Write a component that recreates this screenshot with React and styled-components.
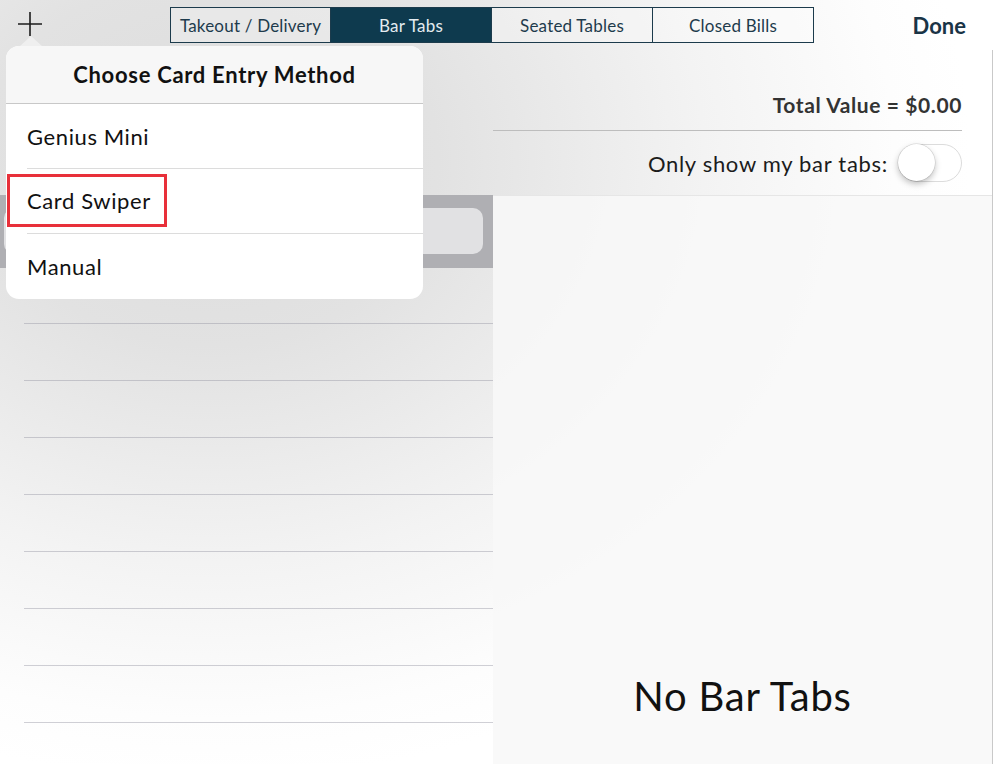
import styled, { createGlobalStyle } from "styled-components";

const GlobalStyle = createGlobalStyle`
    body {
        margin: 0;
        font-family: Lato, "Noto Sans", sans-serif;
    }
`;

const tabs = ["Takeout / Delivery", "Bar Tabs", "Seated Tables", "Closed Bills"];
const methods = ["Genius Mini", "Card Swiper", "Manual"];
const rowCount = 8;

const App = () => {
    return (
        <Page>
            <GlobalStyle />
            <TopBar>
                <PlusButton>
                    <svg width="26" height="26" viewBox="0 0 26 26">
                        <path d="M13 1v24M1 13h24" stroke="#1c1c1c" strokeWidth="1.6" />
                    </svg>
                </PlusButton>
                <Segmented>
                    {tabs.map((t) => (
                        <Segment key={t} active={t === "Bar Tabs"}>{t}</Segment>
                    ))}
                </Segmented>
                <DoneButton>Done</DoneButton>
            </TopBar>
            <Body>
                <LeftPanel>
                    <SearchBand>
                        <SearchField />
                    </SearchBand>
                    {Array.from({ length: rowCount }).map((_, i) => (
                        <ListRow key={i} first={i === 0} />
                    ))}
                </LeftPanel>
                <RightPanel>
                    <RightHeader>
                        <TotalRow>Total Value = $0.00</TotalRow>
                        <FilterRow>
                            <FilterLabel>Only show my bar tabs:</FilterLabel>
                            <Switch>
                                <Knob />
                            </Switch>
                        </FilterRow>
                    </RightHeader>
                    <EmptyArea>
                        <EmptyText>No Bar Tabs</EmptyText>
                    </EmptyArea>
                </RightPanel>
            </Body>
            <PopoverArrow />
            <Popover>
                <PopoverTitle>Choose Card Entry Method</PopoverTitle>
                {methods.map((m) => (
                    <MethodRow key={m}>
                        <MethodText highlight={m === "Card Swiper"}>{m}</MethodText>
                    </MethodRow>
                ))}
            </Popover>
        </Page>
    );
};

const Page = styled.div`
    position: relative;
    width: 993px;
    height: 764px;
    overflow: hidden;
    background: radial-gradient(ellipse 760px 620px at 210px 160px, #dcdcdc 0%, #e2e2e2 30%, #f3f3f3 65%, #fdfdfd 90%, #ffffff 100%);
`;

const TopBar = styled.div`
    height: 50px;
    display: flex;
    align-items: center;
    padding: 0 27px 0 17px;
    box-sizing: border-box;
`;

const PlusButton = styled.div`
    width: 26px;
    height: 26px;
    display: flex;
    margin-top: -2px;
`;

const Segmented = styled.div`
    display: flex;
    margin-left: 127px;
    border: 1px solid #1c3b4c;
    height: 36px;
    box-sizing: border-box;
`;

const Segment = styled.div`
    width: 160px;
    display: flex;
    align-items: center;
    justify-content: center;
    padding-top: 1px;
    font-size: 17px;
    letter-spacing: 0.2px;
    color: ${(p) => (p.active ? "#e4ecf0" : "#1e3b4c")};
    background: ${(p) => (p.active ? "#0e3a4e" : "rgba(255,255,255,0.25)")};
    border-left: 1px solid #1c3b4c;

    &:first-child {
        width: 159px;
        border-left: none;
    }
`;

const DoneButton = styled.div`
    margin-left: auto;
    font-size: 22px;
    font-weight: 700;
    color: #1a3446;
`;

const Body = styled.div`
    display: grid;
    grid-template-columns: 493px 1fr;
    height: 714px;
`;

const LeftPanel = styled.div`
    padding-top: 145px;
`;

const SearchBand = styled.div`
    height: 73px;
    background: #afafb3;
    padding: 13px 10px 0 4px;
    box-sizing: border-box;
`;

const SearchField = styled.div`
    height: 46px;
    border-radius: 10px;
    background: #e1e1e3;
`;

const ListRow = styled.div`
    height: ${(p) => (p.first ? "56px" : "57px")};
    margin-left: 24px;
    border-bottom: 1px solid rgba(150, 150, 165, 0.45);
    box-sizing: border-box;
`;

const RightPanel = styled.div`
    display: flex;
    flex-direction: column;
    border-right: 1px solid #c9c9c9;
`;

const RightHeader = styled.div`
    height: 146px;
    padding: 0 30px 0 0;
    display: flex;
    flex-direction: column;
    border-bottom: 1px solid #e6e6e6;
    box-sizing: border-box;
`;

const TotalRow = styled.div`
    height: 81px;
    display: flex;
    align-items: flex-end;
    justify-content: flex-end;
    padding-bottom: 13px;
    box-sizing: border-box;
    border-bottom: 1px solid #bdbdbd;
    font-size: 21px;
    letter-spacing: 0.6px;
    font-weight: 700;
    color: #333333;
`;

const FilterRow = styled.div`
    flex: 1;
    display: flex;
    align-items: center;
    justify-content: flex-end;
    gap: 10px;
`;

const FilterLabel = styled.span`
    font-size: 22px;
    letter-spacing: 0.7px;
    color: #1c1c1c;
`;

const Switch = styled.div`
    width: 64px;
    height: 38px;
    border-radius: 19px;
    border: 1.5px solid #dcdcdc;
    background: #ffffff;
    box-sizing: border-box;
    position: relative;
`;

const Knob = styled.div`
    position: absolute;
    left: -1px;
    top: -1px;
    width: 37px;
    height: 37px;
    border-radius: 50%;
    background: #ffffff;
    box-shadow: 0 3px 6px rgba(0, 0, 0, 0.25), 0 0 0 0.5px rgba(0, 0, 0, 0.15);
`;

const EmptyArea = styled.div`
    flex: 1;
    background: rgba(248, 248, 248, 0.85);
    display: flex;
    align-items: flex-end;
    justify-content: center;
    padding-bottom: 44px;
`;

const EmptyText = styled.div`
    font-size: 40px;
    letter-spacing: 0.8px;
    color: #111111;
`;

const PopoverArrow = styled.div`
    position: absolute;
    left: 19px;
    top: 36px;
    width: 0;
    height: 0;
    border-left: 12px solid transparent;
    border-right: 12px solid transparent;
    border-bottom: 11px solid #efefef;
`;

const Popover = styled.div`
    position: absolute;
    left: 6px;
    top: 46px;
    width: 417px;
    border-radius: 13px;
    background: #ffffff;
    overflow: hidden;
`;

const PopoverTitle = styled.div`
    height: 57px;
    display: flex;
    align-items: center;
    justify-content: center;
    background: #f7f7f7;
    border-bottom: 1px solid #c8c8c8;
    font-size: 22px;
    letter-spacing: 0.7px;
    font-weight: 700;
    color: #111111;
`;

const MethodRow = styled.div`
    height: 65px;
    margin-left: 21px;
    display: flex;
    align-items: center;
    border-bottom: 1px solid #dcdcdc;
    box-sizing: border-box;

    &:last-child {
        border-bottom: none;
    }
`;

const MethodText = styled.span`
    font-size: 22px;
    letter-spacing: 0.6px;
    color: #111111;
    line-height: 27px;
    padding: 10px ${(p) => (p.highlight ? "13px" : "0")} 10px ${(p) => (p.highlight ? "17px" : "0")};
    margin-left: ${(p) => (p.highlight ? "-20px" : "0")};
    margin-top: ${(p) => (p.highlight ? "-2px" : "0")};
    border: ${(p) => (p.highlight ? "3px solid #e8303a" : "none")};
`;

export default App;
